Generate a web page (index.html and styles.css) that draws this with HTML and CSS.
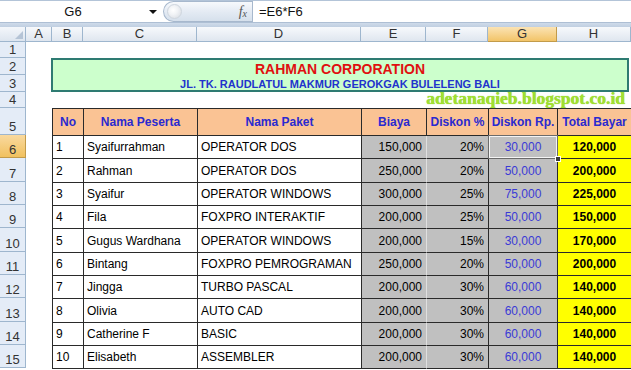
FILE: index.html
```html
<!DOCTYPE html>
<html>
<head>
<meta charset="utf-8">
<link rel="stylesheet" href="styles.css">
</head>
<body>
<div class="app">
  <div class="fbar">
    <div class="namebox"><span class="name">G6</span><span class="dd"></span></div>
    <div class="capsule"><span class="knob"></span><span class="fx"><i>f</i><sub>x</sub></span></div>
    <div class="formula">=E6*F6</div>
  </div>
  <div class="band"></div>
  <div class="sheet">
    <div class="rowhdrs">
      <div class="corner"><span class="tri"></span></div>
      <div class="rh h16">1</div>
      <div class="rh h17">2</div>
      <div class="rh h17">3</div>
      <div class="rh h16">4</div>
      <div class="rh h27">5</div>
      <div class="rh h23 sel">6</div>
      <div class="rh h24">7</div>
      <div class="rh h23">8</div>
      <div class="rh h23">9</div>
      <div class="rh h24">10</div>
      <div class="rh h23">11</div>
      <div class="rh h23">12</div>
      <div class="rh h24">13</div>
      <div class="rh h23">14</div>
      <div class="rh h23">15</div>
    </div>
    <div class="main">
      <div class="colhdrs">
        <div class="ch wA">A</div>
        <div class="ch wB">B</div>
        <div class="ch wC">C</div>
        <div class="ch wD">D</div>
        <div class="ch wE">E</div>
        <div class="ch wF">F</div>
        <div class="ch wG sel">G</div>
        <div class="ch wH">H</div>
      </div>
      <div class="blank h16"></div>
      <div class="titlewrap">
        <div class="title">
          <div class="t1">RAHMAN CORPORATION</div>
          <div class="t2">JL. TK. RAUDLATUL MAKMUR GEROKGAK BULELENG BALI</div>
        </div>
      </div>
      <div class="blank h16 wmrow"><span class="wm">adetanaqieb.blogspot.co.id</span></div>
      <div class="tbl">
        <div class="c hd">No</div>
        <div class="c hd">Nama Peserta</div>
        <div class="c hd">Nama Paket</div>
        <div class="c hd">Biaya</div>
        <div class="c hd">Diskon %</div>
        <div class="c hd">Diskon Rp.</div>
        <div class="c hd">Total Bayar</div>

        <div class="c tx">1</div><div class="c tx">Syaifurrahman</div><div class="c tx">OPERATOR DOS</div><div class="c gr num e">150,000</div><div class="c gr num">20%</div><div class="c gr dr active">30,000<span class="selbox"></span><span class="handle"></span></div><div class="c yl">120,000</div>
        <div class="c tx">2</div><div class="c tx">Rahman</div><div class="c tx">OPERATOR DOS</div><div class="c gr num e">250,000</div><div class="c gr num">20%</div><div class="c gr dr">50,000</div><div class="c yl">200,000</div>
        <div class="c tx">3</div><div class="c tx">Syaifur</div><div class="c tx">OPERATOR WINDOWS</div><div class="c gr num e">300,000</div><div class="c gr num">25%</div><div class="c gr dr">75,000</div><div class="c yl">225,000</div>
        <div class="c tx">4</div><div class="c tx">Fila</div><div class="c tx">FOXPRO INTERAKTIF</div><div class="c gr num e">200,000</div><div class="c gr num">25%</div><div class="c gr dr">50,000</div><div class="c yl">150,000</div>
        <div class="c tx">5</div><div class="c tx">Gugus Wardhana</div><div class="c tx">OPERATOR WINDOWS</div><div class="c gr num e">200,000</div><div class="c gr num">15%</div><div class="c gr dr">30,000</div><div class="c yl">170,000</div>
        <div class="c tx">6</div><div class="c tx">Bintang</div><div class="c tx">FOXPRO PEMROGRAMAN</div><div class="c gr num e">250,000</div><div class="c gr num">20%</div><div class="c gr dr">50,000</div><div class="c yl">200,000</div>
        <div class="c tx">7</div><div class="c tx">Jingga</div><div class="c tx">TURBO PASCAL</div><div class="c gr num e">200,000</div><div class="c gr num">30%</div><div class="c gr dr">60,000</div><div class="c yl">140,000</div>
        <div class="c tx">8</div><div class="c tx">Olivia</div><div class="c tx">AUTO CAD</div><div class="c gr num e">200,000</div><div class="c gr num">30%</div><div class="c gr dr">60,000</div><div class="c yl">140,000</div>
        <div class="c tx">9</div><div class="c tx">Catherine F</div><div class="c tx">BASIC</div><div class="c gr num e">200,000</div><div class="c gr num">30%</div><div class="c gr dr">60,000</div><div class="c yl">140,000</div>
        <div class="c tx">10</div><div class="c tx">Elisabeth</div><div class="c tx">ASSEMBLER</div><div class="c gr num e">200,000</div><div class="c gr num">30%</div><div class="c gr dr">60,000</div><div class="c yl">140,000</div>
      </div>
    </div>
  </div>
</div>
</body>
</html>
```
FILE: styles.css
```css
* { box-sizing: border-box; }
html, body { margin: 0; padding: 0; }
body {
  width: 631px;
  height: 370px;
  overflow: hidden;
  background: #fff;
  font-family: "Liberation Sans", Arial, sans-serif;
  color: #000;
}
.app { width: 631px; height: 370px; overflow: hidden; }

/* formula bar */
.fbar {
  height: 22px;
  display: flex;
  align-items: stretch;
  border-top: 1px solid #b3c4d8;
  background: #fff;
}
.namebox {
  width: 162px;
  display: flex;
  align-items: center;
  position: relative;
}
.name {
  width: 146px;
  text-align: center;
  font-size: 13px;
  color: #111;
}
.dd {
  width: 0; height: 0;
  border-left: 4px solid transparent;
  border-right: 4px solid transparent;
  border-top: 4px solid #111;
  margin-left: 3px;
}
.capsule {
  width: 89px;
  margin: 0 0 0 1px;
  border: 1px solid #a7b8cd;
  border-right: none;
  border-radius: 11px 0 0 11px;
  background: linear-gradient(#f7f9fc, #e3eaf3 55%, #d6e0ec);
  display: flex;
  align-items: center;
  justify-content: space-between;
  padding: 0 5px 0 3px;
}
.knob {
  width: 15px; height: 15px;
  border-radius: 50%;
  background: radial-gradient(circle at 40% 40%, #ffffff 0, #f1f3f6 40%, #d3d9e0 100%);
  border: 1px solid #cfd6de;
}
.fx {
  font-family: "Liberation Serif", "Times New Roman", serif;
  font-size: 14px;
  color: #555;
  line-height: 1;
}
.fx i { font-style: italic; }
.fx sub { font-size: 10px; font-style: italic; vertical-align: -1px; }
.formula {
  flex: 1;
  border-left: 1px solid #a7b8cd;
  padding-left: 6px;
  display: flex;
  align-items: center;
  font-size: 13px;
  color: #111;
}
.band {
  height: 5px;
  background: linear-gradient(#cfdbea, #c0cfe1);
  border-top: 1px solid #aebfd4;
}

/* sheet */
.sheet { display: flex; }
.rowhdrs { width: 26px; flex: none; display: flex; flex-direction: column; }
.corner {
  height: 15px;
  background: linear-gradient(#f4f7fb, #dde5ef);
  border-right: 1px solid #9eb6ce;
  border-bottom: 1px solid #9eb6ce;
  position: relative;
}
.tri {
  position: absolute;
  right: 2px; bottom: 2px;
  width: 0; height: 0;
  border-left: 8px solid transparent;
  border-bottom: 8px solid #b5c4d6;
}
.rh {
  background: #e4ecf7;
  border-right: 1px solid #9eb6ce;
  border-bottom: 1px solid #9eb6ce;
  font-size: 13px;
  color: #333;
  display: flex;
  align-items: flex-end;
  justify-content: center;
  padding-bottom: 1px;
  line-height: 1;
}
.rh.sel {
  background: linear-gradient(#f9d99f, #f1c15f);
  border-bottom-color: #c29b4a;
  border-right-color: #c29b4a;
}
.h16 { height: 16px; }
.h17 { height: 17px; }
.h23 { height: 23px; }
.h24 { height: 24px; }
.h27 { height: 27px; }

.main { flex: 1; min-width: 0; display: flex; flex-direction: column; }
.colhdrs { display: flex; height: 15px; }
.ch {
  flex: none;
  background: linear-gradient(#f7f9fc, #dfe6ef);
  border-right: 1px solid #9eb6ce;
  border-bottom: 1px solid #9eb6ce;
  font-size: 13px;
  color: #333;
  text-align: center;
  line-height: 14px;
}
.ch.sel {
  background: linear-gradient(#fbe3b4, #f2c468);
  border-color: #c29b4a;
}
.wA { width: 26px; }
.wB { width: 31px; }
.wC { width: 114px; }
.wD { width: 164px; }
.wE { width: 65px; }
.wF { width: 62px; }
.wG { width: 69px; }
.wH { width: 74px; }

.titlewrap { height: 34px; padding: 0 2px 0 25px; }
.title {
  height: 34px;
  width: 578px;
  background: #ccffcc;
  border: 2px solid #2e7b72;
  display: flex;
  flex-direction: column;
  align-items: center;
}
.t1 {
  font-weight: bold;
  font-size: 14px;
  color: #e01010;
  line-height: 16px;
  margin-top: 1px;
}
.t2 {
  font-weight: bold;
  font-size: 11px;
  color: #2233cc;
  line-height: 14px;
}

.wmrow { position: relative; }
.wm {
  position: absolute;
  right: 6px;
  top: -4px;
  font-family: "Liberation Serif", "Times New Roman", serif;
  font-weight: bold;
  font-size: 17.5px;
  color: #a2e030;
  text-shadow: 0 0 1px #7cc21c;
  white-space: nowrap;
  line-height: 20px;
}

/* table */
.tbl {
  margin-left: 26px;
  display: grid;
  grid-template-columns: 31px 114px 164px 65px 62px 69px 74px;
  grid-template-rows: 27px 23px 24px 23px 23px 24px 23px 23px 24px 23px 23px;
  border-left: 1px solid #2a2a2a;
  border-top: 1px solid #2a2a2a;
  width: 580px;
}
.c {
  border-right: 1px solid #2a2a2a;
  border-bottom: 1px solid #2a2a2a;
  font-size: 12px;
  display: flex;
  align-items: center;
  white-space: nowrap;
  overflow: hidden;
  position: relative;
}
.hd {
  background: #fac394;
  color: #2a2ad0;
  font-weight: bold;
  font-size: 12px;
  justify-content: center;
}
.tx { background: #fff; padding-left: 3px; }
.gr { background: #c0c0c0; }
.num { justify-content: flex-end; padding-right: 4px; }
.e { border-right-color: #e0e0e0; }
.dr { justify-content: center; color: #3a3ad6; }
.yl { background: #ffff00; font-weight: bold; justify-content: center; }
.active { overflow: visible; z-index: 2; }
.selbox {
  position: absolute;
  left: -1px; top: -1px; right: -1px; bottom: -1px;
  border: 1px solid #6b6b6b;
  box-shadow: inset 0 0 0 1px #f4f4f4;
}
.handle {
  position: absolute;
  right: -4px; bottom: -4px;
  width: 6px; height: 6px;
  background: #3b3b3b;
  border: 1px solid #fff;
}
```
